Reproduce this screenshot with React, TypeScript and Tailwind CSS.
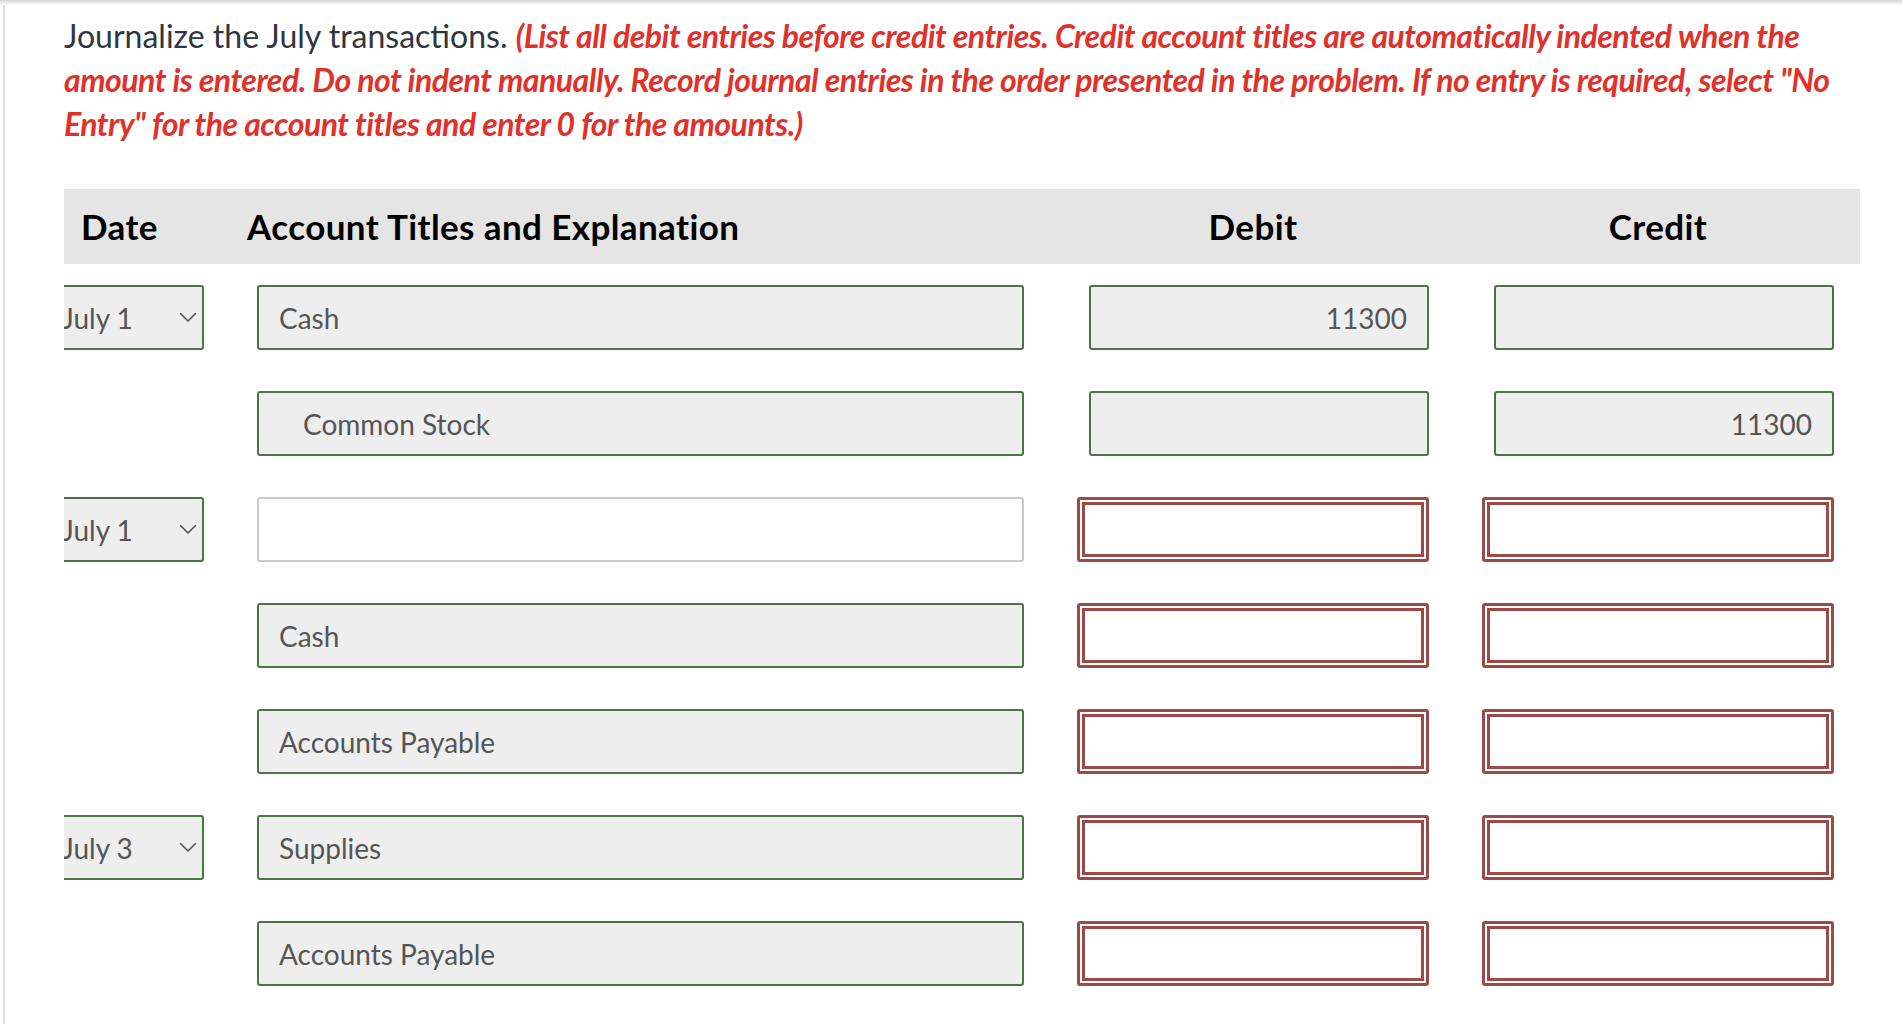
import React from "react";

type Row = {
  date?: string;
  account: string;
  indent?: boolean;
  blankAccount?: boolean;
  debit?: string;
  credit?: string;
  red?: boolean;
};

const rows: Row[] = [
  { date: "July 1", account: "Cash", debit: "11300", credit: "" },
  { account: "Common Stock", indent: true, debit: "", credit: "11300" },
  { date: "July 1", account: "", blankAccount: true, red: true },
  { account: "Cash", red: true },
  { account: "Accounts Payable", red: true },
  { date: "July 3", account: "Supplies", red: true },
  { account: "Accounts Payable", red: true },
];

function Chevron() {
  return (
    <svg width="18" height="11" viewBox="0 0 18 11" fill="none" className="shrink-0">
      <path d="M1.5 1.5 L9 9 L16.5 1.5" stroke="#555" strokeWidth="1.6" strokeLinecap="round" strokeLinejoin="round" />
    </svg>
  );
}

function DateSelect({ label }: { label: string }) {
  return (
    <div className="w-[140px] h-[65px] overflow-hidden">
      <div className="ml-[-14px] w-[154px] h-full rounded-[3px] border-2 border-[#4f7349] bg-[#eeeeee] flex items-center justify-between pl-[10px] pr-[5px]">
        <span className="text-[28px] text-[#555555]">{label}</span>
        <Chevron />
      </div>
    </div>
  );
}

function GreenBox({ value, align = "left", indent = false }: { value: string; align?: "left" | "right"; indent?: boolean }) {
  return (
    <div
      className={
        "h-[65px] rounded-[3px] border-2 border-[#4f7349] bg-[#eeeeee] flex items-center text-[28px] text-[#555555] " +
        (align === "right" ? "justify-end pr-[20px]" : indent ? "pl-[44px]" : "pl-[20px]")
      }
    >
      {value}
    </div>
  );
}

function RedBox() {
  return (
    <div className="h-[65px] rounded-[3px] border-[3px] border-[#9c4a47] bg-white p-[2px]">
      <div className="h-full border-[3px] border-[#9c4a47] bg-white" />
    </div>
  );
}

export default function App() {
  return (
    <div
      className="w-[1902px] h-[1024px] bg-white overflow-hidden relative"
      style={{ fontFamily: "Lato, 'Open Sans', sans-serif" }}
    >
      <div className="h-[5px] bg-gradient-to-b from-[#d4d4d4] to-white" />
      <div className="ml-[3px] border-l-2 border-[#dedede] h-[1019px] pl-[59px]">
        <p className="pt-[9px] text-[32px] leading-[44px] text-[#2f3640]">
          Journalize the July transactions.{" "}
          <span className="font-bold italic text-[#e0322b] tracking-[-0.5px]">
            (List all debit entries before credit entries. Credit account titles are automatically indented when the
            <br />
            amount is entered. Do not indent manually. Record journal entries in the order presented in the problem. If no entry is required, select "No
            <br />
            Entry" for the account titles and enter 0 for the amounts.)
          </span>
        </p>

        <div className="mt-[43px] w-[1796px]">
          <div className="h-[75px] bg-[#e5e5e5] grid grid-cols-[140px_767px_352px_352px] gap-x-[53px] items-center text-[35px] tracking-[0.4px] font-bold text-black">
            <div className="pl-[17px]">Date</div>
            <div className="ml-[-10px]">Account Titles and Explanation</div>
            <div className="text-center">Debit</div>
            <div className="text-center">Credit</div>
          </div>

          <div className="mt-[21px] flex flex-col gap-[41px]">
            {rows.map((r, i) => (
              <div key={i} className="grid grid-cols-[140px_767px_352px_352px] gap-x-[53px]">
                <div>{r.date ? <DateSelect label={r.date} /> : null}</div>
                <div>
                  {r.blankAccount ? (
                    <div className="h-[65px] rounded-[3px] border-2 border-[#cacaca] bg-white" />
                  ) : (
                    <GreenBox value={r.account} indent={r.indent} />
                  )}
                </div>
                <div>
                  {r.red ? (
                    <RedBox />
                  ) : (
                    <div className="ml-[12px]">
                      <GreenBox value={r.debit ?? ""} align="right" />
                    </div>
                  )}
                </div>
                <div>
                  {r.red ? (
                    <RedBox />
                  ) : (
                    <div className="ml-[12px]">
                      <GreenBox value={r.credit ?? ""} align="right" />
                    </div>
                  )}
                </div>
              </div>
            ))}
          </div>
        </div>
      </div>
    </div>
  );
}
